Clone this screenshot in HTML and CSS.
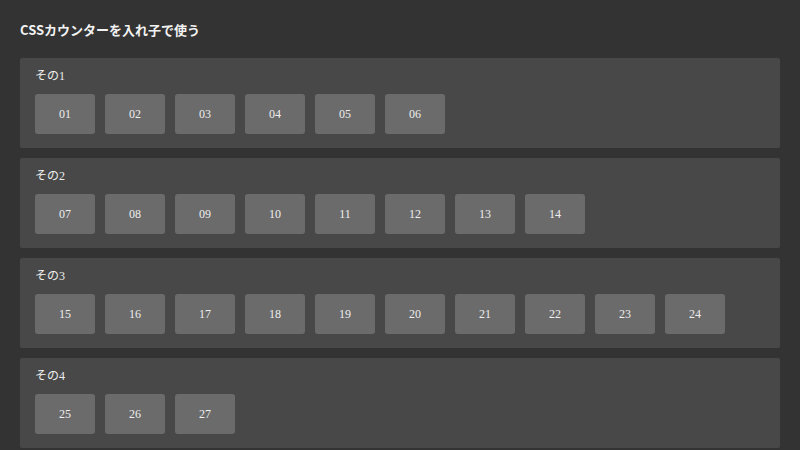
FILE: index.html
```html
<!DOCTYPE html>
<html lang="ja">
<head>
<meta charset="utf-8">
<link rel="stylesheet" href="styles.css">
</head>
<body>
<h1 class="title">CSSカウンターを入れ子で使う</h1>
<div class="groups">
  <section class="group">
    <div class="label">その1</div>
    <div class="items">
      <div class="item">01</div><div class="item">02</div><div class="item">03</div><div class="item">04</div><div class="item">05</div><div class="item">06</div>
    </div>
  </section>
  <section class="group">
    <div class="label">その2</div>
    <div class="items">
      <div class="item">07</div><div class="item">08</div><div class="item">09</div><div class="item">10</div><div class="item">11</div><div class="item">12</div><div class="item">13</div><div class="item">14</div>
    </div>
  </section>
  <section class="group">
    <div class="label">その3</div>
    <div class="items">
      <div class="item">15</div><div class="item">16</div><div class="item">17</div><div class="item">18</div><div class="item">19</div><div class="item">20</div><div class="item">21</div><div class="item">22</div><div class="item">23</div><div class="item">24</div>
    </div>
  </section>
  <section class="group">
    <div class="label">その4</div>
    <div class="items">
      <div class="item">25</div><div class="item">26</div><div class="item">27</div>
    </div>
  </section>
</div>
</body>
</html>
```
FILE: styles.css
```css
html, body {
  margin: 0;
  padding: 0;
  background: #333333;
}
body {
  padding: 20px;
  color: #eeeeee;
  font-family: "Liberation Serif", "Noto Sans CJK JP", serif;
}
.title {
  margin: 0 0 18px;
  font-family: "Noto Sans CJK JP", sans-serif;
  font-size: 13px;
  line-height: 20px;
  font-weight: bold;
  color: #f2f2f2;
}
.groups {
  display: flex;
  flex-direction: column;
  gap: 10px;
}
.group {
  background: #484848;
  border-radius: 2px;
  padding: 10px 15px 14px;
}
.label {
  font-size: 12px;
  line-height: 16px;
  margin-bottom: 10px;
}
.items {
  display: flex;
  gap: 10px;
}
.item {
  width: 60px;
  height: 40px;
  background: #6b6b6b;
  border-radius: 3px;
  display: flex;
  align-items: center;
  justify-content: center;
  font-size: 12px;
}
```
